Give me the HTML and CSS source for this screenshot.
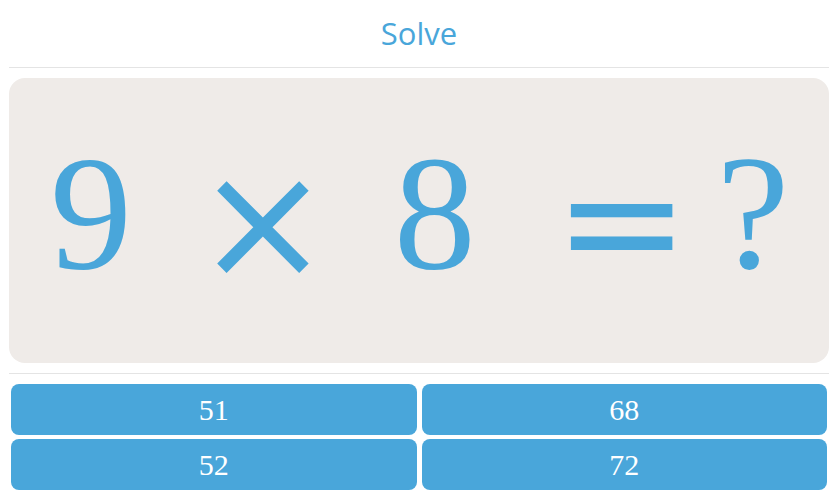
FILE: index.html
```html
<!DOCTYPE html>
<html lang="en">
<head>
  <meta charset="UTF-8" />
  <meta name="viewport" content="width=device-width, initial-scale=1" />
  <title>Solve</title>
  <link rel="stylesheet" href="styles.css">
</head>
<body>
  <div class="app">
    <div class="header">Solve</div>

    <div class="problem">
      <div class="equation">
        <span class="num">9</span>
        <span class="op">×</span>
        <span class="num">8</span>
        <span class="op equals">=</span>
        <span class="num unknown">?</span>
      </div>
    </div>

    <div class="answers">
      <button class="answer">51</button>
      <button class="answer">68</button>
      <button class="answer">52</button>
      <button class="answer">72</button>
    </div>
  </div>
</body>
</html>
```

FILE: styles.css
```css
* { box-sizing: border-box; }
:root {
  --blue: #49a6da;
  --card-bg: #efebe8;
  --line: #e4e4e4;
}
body {
  margin: 0;
  padding: 0;
  background: #fff;
  font-family: "Liberation Serif", serif;
}
.app {
  width: 820px;
  margin-left: 9px;
  height: 501px;
  display: flex;
  flex-direction: column;
}
.header {
  height: 68px;
  border-bottom: 1px solid var(--line);
  display: flex;
  align-items: center;
  justify-content: center;
  padding-bottom: 2px;
  font-family: "Open Sans", sans-serif;
  font-size: 31px;
  color: var(--blue);
}
.problem {
  margin-top: 10px;
  height: 285px;
  background: var(--card-bg);
  border-radius: 16px;
  display: flex;
  align-items: center;
  padding-left: 41px;
}
.equation {
  font-size: 164px;
  line-height: 1;
  color: var(--blue);
  display: flex;
  align-items: baseline;
  gap: 63px;
  white-space: nowrap;
  padding-bottom: 15px;
}
.op {
  font-family: "DejaVu Sans", sans-serif;
  font-size: 162px;
  transform: translateY(10px);
}
.equals {
  margin-left: 15px;
}
.unknown {
  margin-left: -36px;
}
.answers {
  margin-top: 10px;
  border-top: 1px solid var(--line);
  padding: 10px 2px 0;
  display: grid;
  grid-template-columns: 1fr 1fr;
  gap: 4px 5px;
}
.answer {
  height: 51px;
  border: none;
  border-radius: 8px;
  background: var(--blue);
  color: #fff;
  font-family: "Liberation Serif", serif;
  font-size: 30px;
  cursor: pointer;
  padding: 0;
}
```
